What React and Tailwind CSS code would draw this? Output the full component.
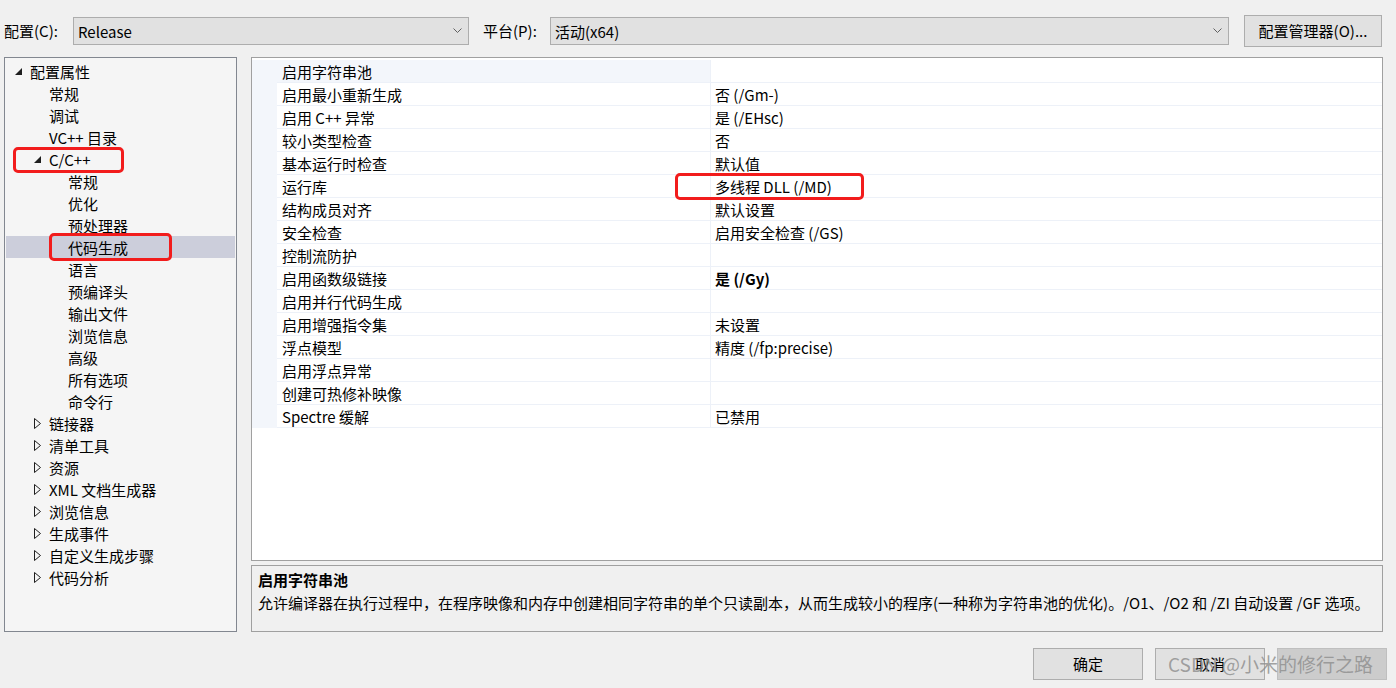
import React from 'react';

const font = { fontFamily: '"Noto Sans CJK SC", "Noto Sans", sans-serif' };

const tree = [
  { label: '配置属性', level: 0, icon: 'open' },
  { label: '常规', level: 1 },
  { label: '调试', level: 1 },
  { label: 'VC++ 目录', level: 1 },
  { label: 'C/C++', level: 1, icon: 'open' },
  { label: '常规', level: 2 },
  { label: '优化', level: 2 },
  { label: '预处理器', level: 2 },
  { label: '代码生成', level: 2, selected: true },
  { label: '语言', level: 2 },
  { label: '预编译头', level: 2 },
  { label: '输出文件', level: 2 },
  { label: '浏览信息', level: 2 },
  { label: '高级', level: 2 },
  { label: '所有选项', level: 2 },
  { label: '命令行', level: 2 },
  { label: '链接器', level: 1, icon: 'closed' },
  { label: '清单工具', level: 1, icon: 'closed' },
  { label: '资源', level: 1, icon: 'closed' },
  { label: 'XML 文档生成器', level: 1, icon: 'closed' },
  { label: '浏览信息', level: 1, icon: 'closed' },
  { label: '生成事件', level: 1, icon: 'closed' },
  { label: '自定义生成步骤', level: 1, icon: 'closed' },
  { label: '代码分析', level: 1, icon: 'closed' },
];

const props = [
  ['启用字符串池', ''],
  ['启用最小重新生成', '否 (/Gm-)'],
  ['启用 C++ 异常', '是 (/EHsc)'],
  ['较小类型检查', '否'],
  ['基本运行时检查', '默认值'],
  ['运行库', '多线程 DLL (/MD)'],
  ['结构成员对齐', '默认设置'],
  ['安全检查', '启用安全检查 (/GS)'],
  ['控制流防护', ''],
  ['启用函数级链接', '是 (/Gy)', true],
  ['启用并行代码生成', ''],
  ['启用增强指令集', '未设置'],
  ['浮点模型', '精度 (/fp:precise)'],
  ['启用浮点异常', ''],
  ['创建可热修补映像', ''],
  ['Spectre 缓解', '已禁用'],
];

const indent = ['pl-[9px]', 'pl-[28px]', 'pl-[47px]'];

const Chevron = () => (
  <svg width="9" height="6" viewBox="0 0 9 6" className="shrink-0">
    <polyline points="0.5,0.5 4.5,4.5 8.5,0.5" fill="none" stroke="#606060" strokeWidth="1" />
  </svg>
);

const Select = ({ value, w }) => (
  <div className={`${w} h-[28px] flex items-center justify-between bg-[#e1e1e1] border border-[#adadad] pl-[4px] pr-[6px]`}>
    <span className="text-[15px] leading-none text-black">{value}</span>
    <Chevron />
  </div>
);

const TreeIcon = ({ type }) => {
  if (type === 'open')
    return (
      <svg width="7" height="7" viewBox="0 0 7 7" className="shrink-0">
        <polygon points="7,0 7,7 0,7" fill="#1e1e1e" />
      </svg>
    );
  if (type === 'closed')
    return (
      <svg width="7" height="11" viewBox="0 0 7 11" className="shrink-0">
        <polygon points="0.5,0.5 6.5,5.5 0.5,10.5" fill="none" stroke="#1e1e1e" strokeWidth="1" />
      </svg>
    );
  return null;
};

const Button = ({ children, disabled }) => (
  <div
    className={`w-[110px] h-[32px] flex items-center justify-center border text-[15px] ${
      disabled ? 'bg-[#cccccc] border-[#bfbfbf] text-[#838383]' : 'bg-[#e1e1e1] border-[#adadad] text-black'
    }`}
  >
    {children}
  </div>
);

export default function App() {
  return (
    <div className="relative w-[1396px] h-[688px] bg-[#f0f0f0] overflow-hidden text-black" style={font}>
      {/* top bar */}
      <div className="flex items-center h-[32px] mt-[15px] pl-[4px]">
        <span className="w-[69px] text-[15px]">配置(C):</span>
        <Select value="Release" w="w-[396px]" />
        <span className="ml-[14px] w-[67px] text-[15px]">平台(P):</span>
        <Select value="活动(x64)" w="w-[679px]" />
        <div className="ml-[15px] w-[138px] h-[32px] flex items-center justify-center bg-[#e1e1e1] border border-[#adadad] text-[15px]">
          配置管理器(O)...
        </div>
      </div>

      {/* main */}
      <div className="flex mt-[10px] pl-[4px] gap-[14px]">
        {/* tree */}
        <div className="relative w-[233px] h-[575px] bg-[#f5f5f5] border border-[#828790] pt-[2px] px-px">
          {tree.map((t, i) => (
            <div
              key={i}
              className={`h-[22px] flex items-center ${indent[t.level]} ${t.selected ? 'bg-[#cccedb]' : ''}`}
            >
              <div className="w-[15px] flex items-center">
                <TreeIcon type={t.icon} />
              </div>
              <span className="text-[15px] leading-none whitespace-nowrap">{t.label}</span>
            </div>
          ))}
          <div className="absolute left-[8px] top-[89px] w-[111px] h-[26px] border-[3px] border-[#f21c1c] rounded-[5px]" />
          <div className="absolute left-[44px] top-[175px] w-[123px] h-[28px] border-[3px] border-[#f21c1c] rounded-[5px]" />
        </div>

        {/* right */}
        <div className="flex flex-col gap-[4px]">
          <div className="relative w-[1132px] h-[504px] bg-white border border-[#a0a0a0] pt-[2px]">
            {props.map(([name, value, bold], i) => (
              <div key={i} className="flex h-[23px]">
                <div className="w-[25px] bg-[#f3f6fb]" />
                <div
                  className={`w-[434px] flex items-center pl-[5px] border-b border-r border-[#edf1f8] ${
                    i === 0 ? 'bg-[#f3f6fb]' : ''
                  }`}
                >
                  <span className="text-[15px] leading-none whitespace-nowrap">{name}</span>
                </div>
                <div className="flex-1 flex items-center pl-[4px] border-b border-[#edf1f8]">
                  <span className={`text-[15px] leading-none whitespace-nowrap ${bold ? 'font-bold' : ''}`}>
                    {value}
                  </span>
                </div>
              </div>
            ))}
            <div className="absolute left-[423px] top-[115px] w-[189px] h-[27px] border-[3px] border-[#f21c1c] rounded-[5px]" />
          </div>
          <div className="w-[1132px] h-[67px] bg-[#f0f0f0] border border-[#a0a0a0] px-[6px] pt-[3px]">
            <div className="text-[15px] font-bold leading-[22px]">启用字符串池</div>
            <div className="text-[15px] leading-[24px] whitespace-nowrap">
              允许编译器在执行过程中，在程序映像和内存中创建相同字符串的单个只读副本，从而生成较小的程序(一种称为字符串池的优化)。/O1、/O2 和 /ZI 自动设置 /GF 选项。
            </div>
          </div>
        </div>
      </div>

      {/* bottom buttons */}
      <div className="flex justify-end mt-[16px] pr-[9px] gap-[12px]">
        <Button>确定</Button>
        <Button>取消</Button>
        <Button disabled> </Button>
      </div>

      {/* watermark */}
      <div className="absolute left-[1168px] top-[654px] text-[19px] leading-none text-[#8c8c8c]/80 whitespace-nowrap">
        CSDN @小米的修行之路
      </div>
    </div>
  );
}
